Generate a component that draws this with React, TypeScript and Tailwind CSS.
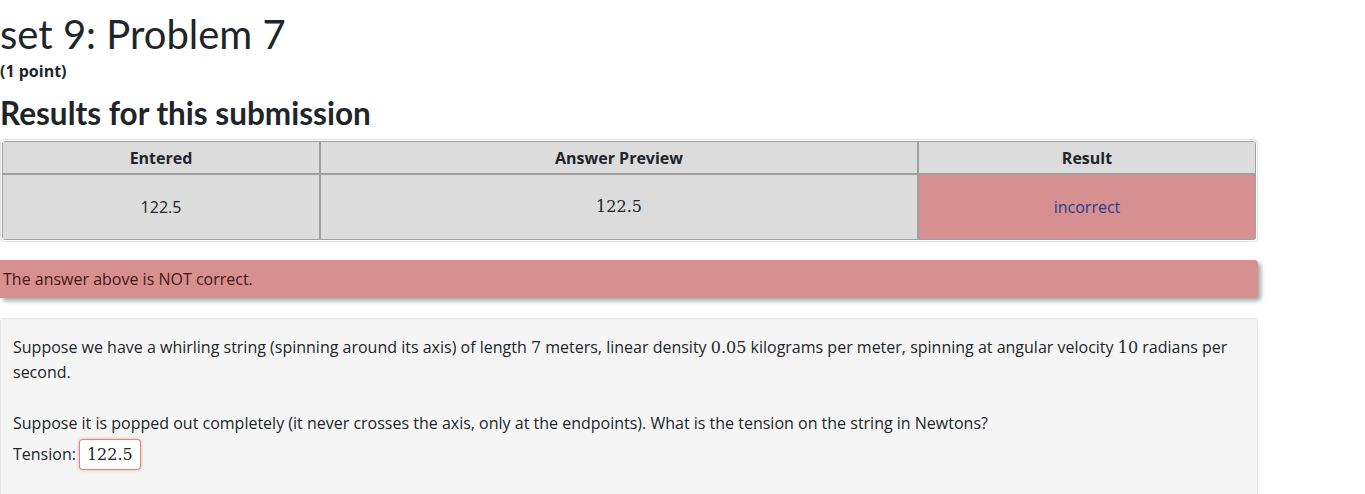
import React from "react";

const M = ({ children }: { children: React.ReactNode }) => (
  <span className="font-['DejaVu_Serif','Liberation_Serif',serif] text-[16px]">{children}</span>
);

export default function App() {
  return (
    <div className="min-h-screen bg-white text-[#212529] font-['Open_Sans','Noto_Sans',sans-serif] overflow-hidden">
      <div className="w-[1258px]">
        {/* Title */}
        <h1 className="font-['Lato',sans-serif] text-[40px] leading-[48px] pt-[10px] font-normal">set 9: Problem 7</h1>
        <div className="text-[16px] font-bold leading-[20px] mt-[3px]">(1 point)</div>
        <h2 className="font-['Lato',sans-serif] text-[31.5px] font-bold leading-[36px] mt-[14px] mb-[8px]">Results for this submission</h2>

        {/* Results table */}
        <div className="border border-[#e0e0e0] rounded-[4px] p-px">
          <div className="grid grid-cols-[319px_598px_1fr] bg-[#dcdcdc] rounded-[4px] overflow-hidden text-[16px]">
            <div className="h-[34px] flex items-center justify-center font-bold border-r-2 border-b-2 border-[#a0a0a0] border-l border-t">Entered</div>
            <div className="h-[34px] flex items-center justify-center font-bold border-r-2 border-b-2 border-[#a0a0a0] border-t">Answer Preview</div>
            <div className="h-[34px] flex items-center justify-center font-bold border-b-2 border-[#a0a0a0] border-t border-r">Result</div>
            <div className="h-[65px] flex items-center justify-center border-r-2 border-[#a0a0a0] border-l border-b">122.5</div>
            <div className="h-[65px] flex items-center justify-center border-r-2 border-[#a0a0a0] border-b">
              <M>122.5</M>
            </div>
            <div className="h-[65px] flex items-center justify-center bg-[#d69090] text-[#223e93] border-[#a0a0a0] border-b border-r">incorrect</div>
          </div>
        </div>

        {/* Alert */}
        <div className="mt-[18px] h-[38px] flex items-center px-[3px] bg-[#d69090] text-[#4a1616] text-[16px] rounded-r-[4px] shadow-[3px_3px_4px_rgba(0,0,0,0.35)]">
          The answer above is NOT correct.
        </div>

        {/* Problem */}
        <div className="mt-[20px] bg-[#f5f5f5] border border-[#e3e3e3] rounded-[4px] px-[12px] pt-[16px] pb-[40px] text-[16px] leading-[25px]">
          <p>
            Suppose we have a whirling string (spinning around its axis) of length <M>7</M> meters, linear density{" "}
            <M>0.05</M> kilograms per meter, spinning at angular velocity <M>10</M> radians per second.
          </p>
          <p className="mt-[26px]">
            Suppose it is popped out completely (it never crosses the axis, only at the endpoints). What is the tension
            on the string in Newtons?
          </p>
          <div className="mt-[3px] flex items-center">
            <span>Tension:</span>
            <span className="ml-[3px] inline-flex items-center h-[31px] px-[7px] bg-white border border-[#d9534f]/70 rounded-[4px] shadow-[0_0_3px_rgba(217,83,79,0.5)]">
              <M>122.5</M>
            </span>
          </div>
        </div>
      </div>
    </div>
  );
}
